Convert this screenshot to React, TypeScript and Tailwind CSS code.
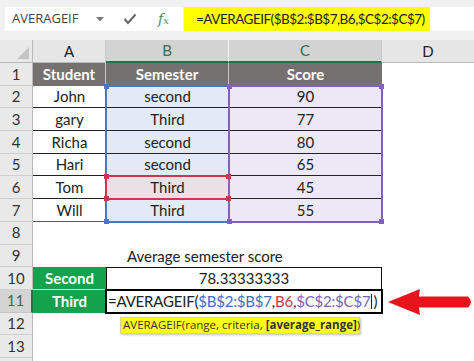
const cell = "font-['Lato',sans-serif] text-[15px] flex items-center justify-center";

const data = [
  ["John", "second", "90"],
  ["gary", "Third", "77"],
  ["Richa", "second", "80"],
  ["Hari", "second", "65"],
  ["Tom", "Third", "45"],
  ["Will", "Third", "55"],
];

function RowHead({ n, active }: { n?: number; active?: boolean }) {
  return (
    <div
      className={
        active
          ? `${cell} bg-[#d4d4d4] text-[#3d6b4c] border-b border-b-[#c4c4c4] border-r-2 border-r-[#217346]`
          : `${cell} bg-[#e9e9e9] text-[#333] border-b border-b-[#cfcfcf] border-r border-r-[#b9b9b9]`
      }
    >
      {n}
    </div>
  );
}

function Corner({ className }: { className: string }) {
  return <div className={`absolute w-[5px] h-[5px] z-20 ${className}`} />;
}

export default function App() {
  return (
    <div className="w-[474px] h-[361px] overflow-hidden bg-white">
      {/* formula bar */}
      <div className="h-[40px] bg-[#f1f1f1] pt-[7px] flex">
        <div className="ml-[5px] w-[178px] h-[24px] bg-white flex items-center">
          <span className="ml-[7px] w-[76px] font-['Open_Sans',sans-serif] text-[13px] text-[#444]">
            AVERAGEIF
          </span>
          <svg width="8" height="5" viewBox="0 0 8 5" className="ml-[8px]">
            <polygon points="0,0 8,0 4,4.5" fill="#7a7a7a" />
          </svg>
          <svg width="14" height="12" viewBox="0 0 14 12" className="ml-[19px]">
            <polyline points="1.5,6 5,10 12.5,1.5" fill="none" stroke="#666" strokeWidth="2" />
          </svg>
          <span className="ml-[21px] font-['DejaVu_Serif',serif] italic text-[14px] text-[#4f8a5f] leading-none">
            f<span className="text-[10px]">x</span>
          </span>
        </div>
        <div className="ml-px w-[246px] h-[24px] bg-[#ffff00] pl-[12px] flex items-center font-['Lato',sans-serif] text-[13.5px] tracking-[-0.5px] text-[#222] whitespace-nowrap">
          =AVERAGEIF($B$2:$B$7,B6,$C$2:$C$7)
        </div>
        <div className="flex-1 h-[24px] bg-white" />
      </div>

      {/* sheet */}
      <div className="relative">
        <div className="grid grid-cols-[33px_73px_123px_153px_92px] grid-rows-[23px_repeat(14,22.7px)]">
          {/* column headers */}
          <div className="bg-[#e9e9e9] border-r border-b border-[#b9b9b9] flex items-end justify-end p-[3px]">
            <svg width="12" height="12" viewBox="0 0 12 12">
              <polygon points="12,0 12,12 0,12" fill="#c4c4c4" />
            </svg>
          </div>
          <div className={`${cell} bg-[#e6e6e6] text-[#222] border-r border-[#c9c9c9] border-b border-b-[#b9b9b9]`}>A</div>
          <div className={`${cell} bg-[#d3d3d3] text-[#3d6b4c] border-r border-[#f4f4f4] border-b-2 border-b-[#217346]`}>B</div>
          <div className={`${cell} bg-[#d3d3d3] text-[#3d6b4c] border-r border-[#c9c9c9] border-b-2 border-b-[#217346]`}>C</div>
          <div className={`${cell} bg-[#e6e6e6] text-[#222] border-b border-b-[#b9b9b9]`}>D</div>

          {/* row 1 */}
          <RowHead n={1} />
          <div className={`${cell} bg-[#767171] text-white font-bold border-r border-[#c8c8c8]`}>Student</div>
          <div className={`${cell} bg-[#767171] text-white font-bold border-r border-[#c8c8c8]`}>Semester</div>
          <div className={`${cell} bg-[#767171] text-white font-bold`}>Score</div>
          <div />

          {/* rows 2-7 */}
          {data.map((r, i) => (
            <div key={i} className="contents">
              <RowHead n={i + 2} />
              <div className={`${cell} text-[#222] border-b ${i === 5 ? "border-[#555]" : "border-[#222]"}`}>{r[0]}</div>
              <div className={`${cell} text-[#222] border-b border-[#222] ${i === 4 ? "bg-[#ecdfe6]" : "bg-[#e1eaf6]"}`}>{r[1]}</div>
              <div className={`${cell} text-[#222] border-b border-[#222] bg-[#ece8f5]`}>{r[2]}</div>
              <div />
            </div>
          ))}

          {/* row 8 */}
          <RowHead n={8} />
          <div />
          <div />
          <div />
          <div />

          {/* row 9 */}
          <RowHead n={9} />
          <div />
          <div className={`${cell} col-span-2 justify-start pl-[21px] text-[#222]`}>Average semester score</div>
          <div />

          {/* row 10 */}
          <RowHead n={10} />
          <div className={`${cell} bg-[#14a24c] text-white font-bold border-b border-[#d0e8d8]`}>Second</div>
          <div className={`${cell} col-span-2 border border-[#111] text-[#222]`}>78.33333333</div>
          <div />

          {/* row 11 */}
          <RowHead n={11} active />
          <div className={`${cell} bg-[#14a24c] text-white font-bold`}>Third</div>
          <div className={`${cell} col-span-2 justify-start border-2 border-[#000] -m-px pl-px text-[#222] text-[14.5px] tracking-[-0.2px] whitespace-nowrap relative z-10 bg-white`}>
            =AVERAGEIF(
            <span className="text-[#3b6fc6]">$B$2:$B$7</span>,
            <span className="text-[#c0404a]">B6</span>,
            <span className="text-[#7d5fb5]">$C$2:$C$7</span>
            <span className="w-px h-[15px] bg-[#222] mx-px" />)
          </div>
          <div />

          {/* rows 12-14 */}
          <RowHead n={12} />
          <div />
          <div />
          <div />
          <div />
          <RowHead n={13} />
          <div />
          <div />
          <div />
          <div />
          <RowHead />
          <div />
          <div />
          <div />
          <div />
        </div>

        {/* range highlight overlays */}
        <div className="absolute inset-0 grid grid-cols-[33px_73px_123px_153px_92px] grid-rows-[23px_repeat(14,22.7px)] pointer-events-none">
          <div className="col-start-3 row-start-3 row-span-6 -m-px border-2 border-[#4a76c6] relative">
            <Corner className="-left-[3px] -top-[3px] bg-[#4a76c6]" />
            <Corner className="-left-[3px] -bottom-[3px] bg-[#4a76c6]" />
          </div>
          <div className="col-start-3 row-start-7 -m-px border-2 border-[#c23a4c] relative">
            <Corner className="-left-[3px] -top-[3px] bg-[#c23a4c]" />
            <Corner className="-left-[3px] -bottom-[3px] bg-[#c23a4c]" />
            <Corner className="-right-[3px] -top-[3px] bg-[#c23a4c]" />
            <Corner className="-right-[3px] -bottom-[3px] bg-[#c23a4c]" />
          </div>
          <div className="col-start-4 row-start-3 row-span-6 -m-px border-2 border-[#8360bd] relative">
            <Corner className="-left-[3px] -top-[3px] bg-[#8360bd]" />
            <Corner className="-left-[3px] -bottom-[3px] bg-[#8360bd]" />
            <Corner className="-right-[3px] -top-[3px] bg-[#8360bd]" />
            <Corner className="-right-[3px] -bottom-[3px] bg-[#8360bd]" />
          </div>

          {/* tooltip */}
          <div className="col-start-3 col-span-2 row-start-13 self-start ml-[14px] mt-[4px] w-[240px] h-[17px] bg-[#ffff1e] border border-[#d6d6a0] shadow-[1px_1px_2px_rgba(0,0,0,0.25)] flex items-center pl-[2px] font-['Open_Sans',sans-serif] text-[11.5px] text-[#333] whitespace-nowrap">
            AVERAGEIF(range, criteria, <b className="ml-[3px]">[average_range]</b>)
          </div>

          {/* arrow */}
          <div className="col-start-5 row-start-12 -mt-[2px] ml-[4px]">
            <svg width="88" height="28" viewBox="0 0 88 28" className="overflow-visible">
              <path d="M2 14 L34 1 L33 8.5 L82 8.5 Q88 14 82 19.5 L33 19.5 L34 27 Z" fill="#e8141c" />
            </svg>
          </div>
        </div>
      </div>
    </div>
  );
}
